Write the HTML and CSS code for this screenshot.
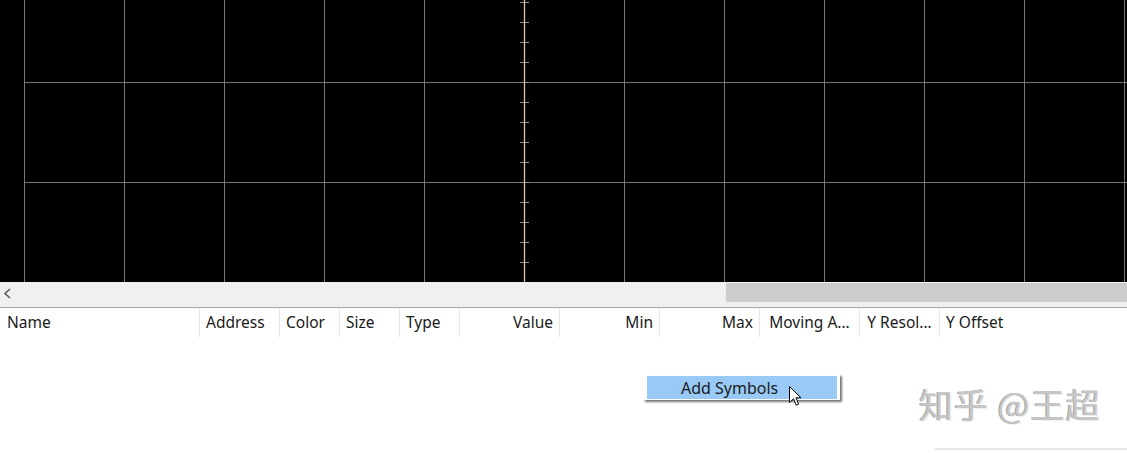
FILE: index.html
```html
<!DOCTYPE html>
<html>
<head>
<meta charset="utf-8">
<link rel="stylesheet" href="styles.css">
</head>
<body>
<div class="app">
  <div class="plot">
    <svg width="1127" height="282" viewBox="0 0 1127 282">
      <rect x="0" y="0" width="1127" height="282" fill="#000"/>
      <g stroke="#767676" stroke-width="1">
        <line x1="24.5" y1="0" x2="24.5" y2="282"/>
        <line x1="124.5" y1="0" x2="124.5" y2="282"/>
        <line x1="224.5" y1="0" x2="224.5" y2="282"/>
        <line x1="324.5" y1="0" x2="324.5" y2="282"/>
        <line x1="424.5" y1="0" x2="424.5" y2="282"/>
        <line x1="624.5" y1="0" x2="624.5" y2="282"/>
        <line x1="724.5" y1="0" x2="724.5" y2="282"/>
        <line x1="824.5" y1="0" x2="824.5" y2="282"/>
        <line x1="924.5" y1="0" x2="924.5" y2="282"/>
        <line x1="1024.5" y1="0" x2="1024.5" y2="282"/>
        <line x1="1124.5" y1="0" x2="1124.5" y2="282"/>
        <line x1="24" y1="82.5" x2="1127" y2="82.5"/>
        <line x1="24" y1="182.5" x2="1127" y2="182.5"/>
      </g>
      <g stroke="#9a9a9a" stroke-width="1">
        <line x1="520" y1="2.5" x2="529" y2="2.5"/>
        <line x1="520" y1="22.5" x2="529" y2="22.5"/>
        <line x1="520" y1="42.5" x2="529" y2="42.5"/>
        <line x1="520" y1="62.5" x2="529" y2="62.5"/>
        <line x1="520" y1="82.5" x2="529" y2="82.5"/>
        <line x1="520" y1="102.5" x2="529" y2="102.5"/>
        <line x1="520" y1="122.5" x2="529" y2="122.5"/>
        <line x1="520" y1="142.5" x2="529" y2="142.5"/>
        <line x1="520" y1="162.5" x2="529" y2="162.5"/>
        <line x1="520" y1="182.5" x2="529" y2="182.5"/>
        <line x1="520" y1="202.5" x2="529" y2="202.5"/>
        <line x1="520" y1="222.5" x2="529" y2="222.5"/>
        <line x1="520" y1="242.5" x2="529" y2="242.5"/>
        <line x1="520" y1="262.5" x2="529" y2="262.5"/>
      </g>
      <line x1="524.5" y1="0" x2="524.5" y2="282" stroke="#dcc4a2" stroke-width="1.3"/>
    </svg>
  </div>

  <div class="hscroll">
    <svg class="arrow" width="12" height="25" viewBox="0 0 12 25">
      <polyline points="10,7 5,11.5 10,16" fill="none" stroke="#5a5a5a" stroke-width="1.6"/>
    </svg>
    <div class="thumb"></div>
  </div>

  <div class="header">
    <div class="col left name">Name</div>
    <div class="col left">Address</div>
    <div class="col left">Color</div>
    <div class="col left">Size</div>
    <div class="col left">Type</div>
    <div class="col right">Value</div>
    <div class="col right">Min</div>
    <div class="col right">Max</div>
    <div class="col center">Moving A...</div>
    <div class="col center">Y Resol...</div>
    <div class="col left last">Y Offset</div>
  </div>

  <div class="body">
    <div class="menu">
      <div class="menu-item">Add Symbols</div>
    </div>
    <svg class="cursor" width="14" height="21" viewBox="0 0 14 21">
      <path d="M0.5,0.5 L0.5,16.5 L4.5,12.8 L7.2,19.2 L9.6,18.2 L7,11.8 L12,11.8 Z" fill="#fff" stroke="#000" stroke-width="1" stroke-linejoin="miter"/>
    </svg>
    <div class="watermark">知乎 @王超</div>
    <div class="edge"></div>
  </div>
</div>
</body>
</html>
```

FILE: styles.css
```css
html, body {
  margin: 0;
  padding: 0;
  background: #fff;
}

.app {
  width: 1127px;
  height: 453px;
  display: flex;
  flex-direction: column;
  overflow: hidden;
  font-family: "Noto Sans", "Noto Sans CJK SC", sans-serif;
  color: #1a1a1a;
}

.plot {
  height: 282px;
  flex: none;
}

.plot svg {
  display: block;
}

.hscroll {
  height: 25px;
  flex: none;
  background: #f0f0f0;
  border-bottom: 1px solid #a9a9a9;
  display: flex;
  align-items: flex-start;
}

.hscroll .arrow {
  display: block;
  flex: none;
}

.thumb {
  margin-left: auto;
  margin-top: 1px;
  width: 401px;
  height: 19px;
  background: #cdcdcd;
}

.header {
  height: 29px;
  flex: none;
  display: grid;
  grid-template-columns: 200px 80px 60px 60px 60px 100px 100px 100px 100px 80px 1fr;
  font-size: 15.5px;
  line-height: 29px;
}

.col {
  border-right: 1px solid #e6e6e6;
  white-space: nowrap;
  overflow: hidden;
  padding: 0 6px;
}

.col.name {
  padding-left: 7px;
}

.col.right {
  text-align: right;
}

.col.center {
  text-align: center;
  padding: 0;
}

.col.last {
  border-right: none;
}

.body {
  flex: 1;
  position: relative;
}

.menu {
  position: absolute;
  left: 643px;
  top: 37px;
  width: 190px;
  padding: 2px 3px 1px 4px;
  background: #fff;
  box-shadow: 2px 2px 2px rgba(0, 0, 0, 0.55);
}

.menu-item {
  height: 23px;
  line-height: 25px;
  background: #99c9f5;
  font-size: 16px;
  padding-left: 34px;
  color: #1c1c1c;
}

.cursor {
  position: absolute;
  left: 789px;
  top: 49px;
}

.watermark {
  position: absolute;
  left: 919px;
  top: 47px;
  font-family: "Noto Sans CJK SC", sans-serif;
  font-size: 34px;
  line-height: 40px;
  letter-spacing: 1px;
  color: #c6c6c6;
  text-shadow: -1px 0 0 #a2a2a2, 1px 1px 0 #eeeeee;
  white-space: nowrap;
}

.edge {
  position: absolute;
  left: 935px;
  right: 0;
  top: 111px;
  height: 2px;
  background: #e6e6e6;
}
```
